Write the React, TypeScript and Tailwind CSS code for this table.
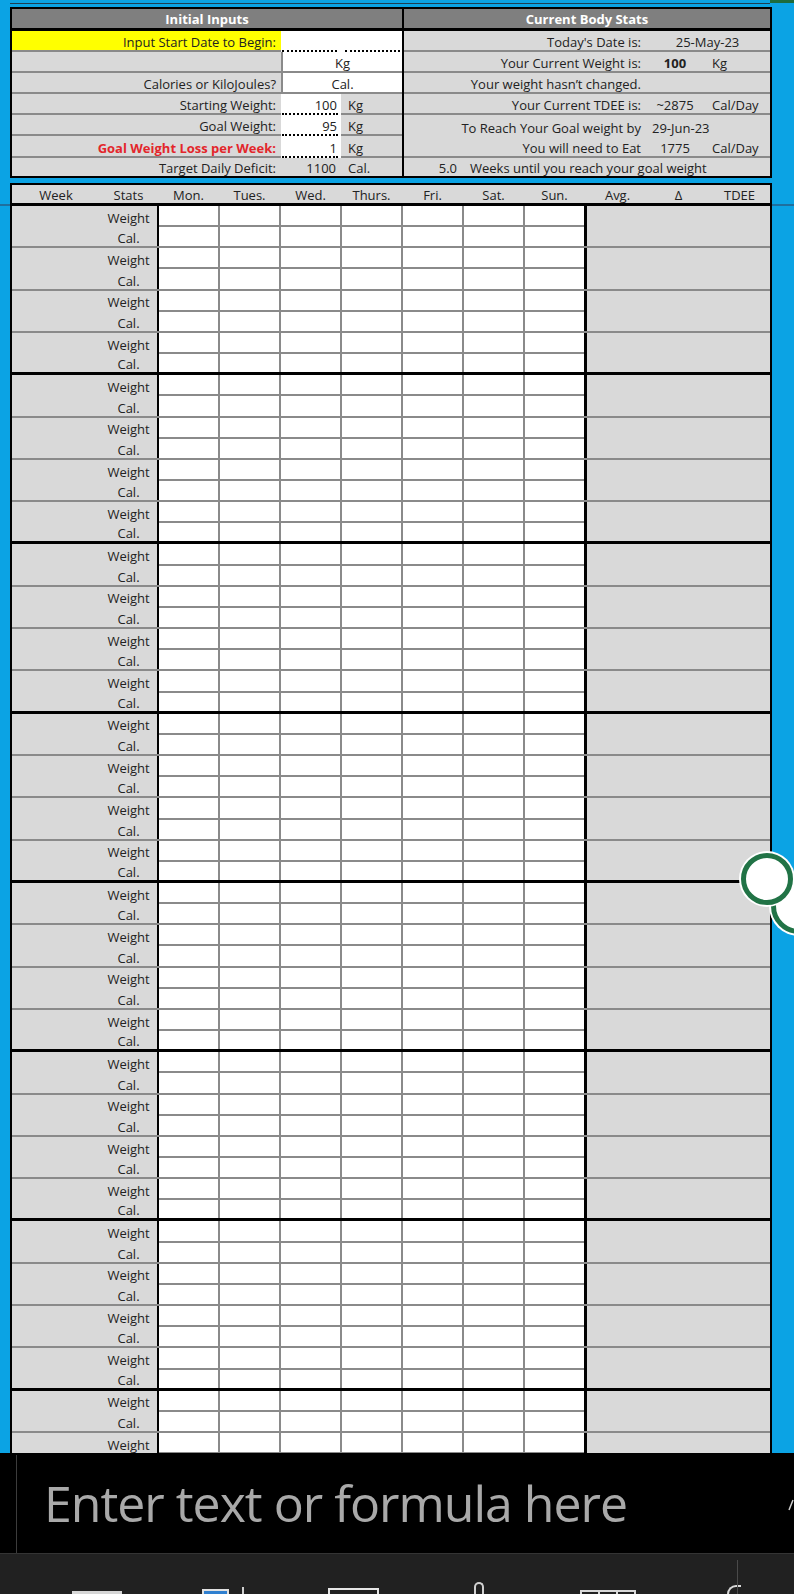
import React from 'react';

const DAYS = ['Mon.', 'Tues.', 'Wed.', 'Thurs.', 'Fri.', 'Sat.', 'Sun.'];

function InputsPanel() {
  return (
    <div className="w-[390px] flex flex-col">
      <div className="h-[21.5px] bg-[#7f7f7f] border-b-[3px] border-black flex items-end justify-center pb-[2px] leading-[13px] font-bold text-white">
        Initial Inputs
      </div>

      {/* start date */}
      <div className="flex h-[21.2px]">
        <div className="w-[269px] bg-[#ffff00] border-b-2 border-[#8a8a8a] flex items-end justify-end pr-[5px] pb-[1px] leading-[13px]">
          Input Start Date to Begin:
        </div>
        <div className="w-[60px] bg-white flex flex-col">
          <div className="flex-1" />
          <div className="ml-[1px] mr-[4px] border-b-2 border-dotted border-black" />
        </div>
        <div className="flex-1 bg-white flex flex-col">
          <div className="flex-1" />
          <div className="ml-[4px] mr-[2px] border-b-2 border-dotted border-black" />
        </div>
      </div>

      <div className="flex h-[21.2px]">
        <div className="w-[269px] bg-[#d9d9d9] border-b-2 border-[#8a8a8a]" />
        <div className="flex-1 bg-white border-b-2 border-l-2 border-[#8a8a8a] flex items-end justify-center pb-[1px] leading-[13px]">
          Kg
        </div>
      </div>

      <div className="flex h-[21.2px]">
        <div className="w-[269px] bg-[#d9d9d9] border-b-2 border-[#8a8a8a] flex items-end justify-end pr-[5px] pb-[1px] leading-[13px]">
          Calories or KiloJoules?
        </div>
        <div className="flex-1 bg-white border-b-2 border-l-2 border-[#8a8a8a] flex items-end justify-center pb-[1px] leading-[13px]">
          Cal.
        </div>
      </div>

      {[
        { label: 'Starting Weight:', value: '100', red: false },
        { label: 'Goal Weight:', value: '95', red: false },
        { label: 'Goal Weight Loss per Week:', value: '1', red: true },
      ].map((r) => (
        <div key={r.label} className="flex h-[21.2px]">
          <div
            className={`w-[269px] bg-[#d9d9d9] border-b-2 border-[#8a8a8a] flex items-end justify-end pr-[5px] pb-[1px] leading-[13px] ${
              r.red ? 'font-bold text-[#e3262b]' : ''
            }`}
          >
            {r.label}
          </div>
          <div className="w-[60px] bg-white flex flex-col">
            <div className="flex-1 flex items-end justify-end pr-[4px] pb-[1px] leading-[13px]">{r.value}</div>
            <div className="ml-[1px] mr-[3px] border-b-2 border-dotted border-black" />
          </div>
          <div className="flex-1 bg-[#d9d9d9] border-b-2 border-[#8a8a8a] flex items-end pl-[7px] pb-[1px] leading-[13px]">
            Kg
          </div>
        </div>
      ))}

      <div className="flex h-[18.3px]">
        <div className="w-[269px] bg-[#d9d9d9] flex items-end justify-end pr-[5px] pb-[1px] leading-[13px]">
          Target Daily Deficit:
        </div>
        <div className="w-[60px] bg-[#d9d9d9] flex items-end justify-end pr-[5px] pb-[1px] leading-[13px]">1100</div>
        <div className="flex-1 bg-[#d9d9d9] flex items-end pl-[7px] pb-[1px] leading-[13px]">Cal.</div>
      </div>
    </div>
  );
}

function StatRow({
  label,
  value,
  unit,
  bold,
}: {
  label: string;
  value?: string;
  unit?: string;
  bold?: boolean;
}) {
  return (
    <div className="flex h-[21.2px] bg-[#d9d9d9] border-b-2 border-[#8a8a8a] leading-[13px]">
      <div className="w-[241px] flex items-end justify-end pr-[4px] pb-[1px]">{label}</div>
      <div className={`w-[60px] flex items-end justify-center pb-[1px] ${bold ? 'font-bold' : ''}`}>{value}</div>
      <div className="flex-1 flex items-end pl-[7px] pb-[1px]">{unit}</div>
    </div>
  );
}

function StatsPanel() {
  return (
    <div className="flex-1 flex flex-col border-l-2 border-black">
      <div className="h-[21.5px] bg-[#7f7f7f] border-b-[3px] border-black flex items-end justify-center pb-[2px] leading-[13px] font-bold text-white">
        Current Body Stats
      </div>
      <div className="flex h-[21.2px] bg-[#d9d9d9] border-b-2 border-[#8a8a8a] leading-[13px]">
        <div className="w-[241px] flex items-end justify-end pr-[4px] pb-[1px]">Today's Date is:</div>
        <div className="flex-1 flex items-end justify-center pb-[1px]">25-May-23</div>
      </div>
      <StatRow label="Your Current Weight is:" value="100" unit="Kg" bold />
      <StatRow label="Your weight hasn’t changed." />
      <StatRow label="Your Current TDEE is:" value="~2875" unit="Cal/Day" />
      <div className="flex h-[21.2px] bg-[#d9d9d9] leading-[13px]">
        <div className="w-[241px] flex items-end justify-end pr-[4px] pb-[1px]">To Reach Your Goal weight by</div>
        <div className="flex-1 flex items-end pl-[7px] pb-[1px]">29-Jun-23</div>
      </div>
      <StatRow label="You will need to Eat" value="1775" unit="Cal/Day" />
      <div className="flex h-[18.3px] bg-[#d9d9d9] leading-[13px]">
        <div className="w-[56px] flex items-end justify-end pr-[3px] pb-[1px]">5.0</div>
        <div className="flex-1 flex items-end pl-[10px] pb-[1px]">Weeks until you reach your goal weight</div>
      </div>
    </div>
  );
}

function Pair({ end, half }: { end: boolean; half?: boolean }) {
  return (
    <div
      className={`flex h-[42.32px] shrink-0 ${
        end ? 'border-b-[3px] border-black' : 'border-b-2 border-[#8a8a8a]'
      }`}
    >
      <div className="w-[145px] bg-[#d9d9d9] flex">
        <div className="w-[88px]" />
        <div className="w-[57px] flex flex-col leading-[13px]">
          <div className="h-[21.16px] flex items-end justify-center pb-[2.5px]">Weight</div>
          <div className="flex-1 flex items-end justify-center pb-[1px]">{half ? '' : 'Cal.'}</div>
        </div>
      </div>
      <div className="w-[2px] bg-black" />
      {DAYS.map((d, i) => (
        <div
          key={d}
          className={`flex flex-col bg-white ${i === 0 ? 'w-[59px]' : 'w-[61px] border-l-2 border-[#8a8a8a]'}`}
        >
          <div className="h-[21.16px] border-b-2 border-[#8a8a8a]" />
          <div className="flex-1" />
        </div>
      ))}
      <div className="w-[3px] bg-black" />
      <div className="flex-1 bg-[#d9d9d9]" />
    </div>
  );
}

function Tracker() {
  // 7 full weeks, then the first rows of week 8 before the formula bar cuts in
  const pairs = Array.from({ length: 30 }, (_, i) => i);
  return (
    <div className="flex-1 min-h-0 flex flex-col border-2 border-b-0 border-black overflow-hidden">
      <div className="h-[21px] shrink-0 flex bg-[#d9d9d9] border-b-[3px] border-black leading-[13px]">
        <div className="w-[88px] flex items-end justify-center pb-[0.5px]">Week</div>
        <div className="w-[57px] flex items-end justify-center pb-[0.5px]">Stats</div>
        <div className="w-[2px]" />
        {DAYS.map((d, i) => (
          <div
            key={d}
            className={`flex items-end justify-center pb-[0.5px] ${i === 0 ? 'w-[59px]' : 'w-[61px] pl-[2px]'}`}
          >
            {d}
          </div>
        ))}
        <div className="w-[3px]" />
        <div className="w-[61px] flex items-end justify-center pb-[0.5px]">Avg.</div>
        <div className="w-[61px] flex items-end justify-center pb-[0.5px]">Δ</div>
        <div className="flex-1 flex items-end justify-center pb-[0.5px]">TDEE</div>
      </div>
      {pairs.map((p) => (
        <Pair key={p} end={p % 4 === 3} half={p === pairs.length - 1} />
      ))}
    </div>
  );
}

function BottomBar() {
  return (
    <div className="h-[41px] bg-[#212121] border-t border-[#343434] flex items-end overflow-hidden">
      <div className="ml-[72px] w-[50px] h-[3px] bg-[#d6d6d6]" />
      <div className="ml-[80px] w-[27px] h-[5px] bg-[#2f7fcf] border-2 border-b-0 border-[#e0e0e0]" />
      <div className="ml-[13px] w-[2px] h-[7px] bg-[#cfcfcf]" />
      <div className="ml-[84px] w-[51px] h-[6px] border-2 border-b-0 border-[#e6e6e6]" />
      <div className="ml-[95px] w-[10px] h-[12px] border-2 border-b-0 border-[#d0d0d0] rounded-t-full" />
      <div className="ml-[96px] w-[56px] h-[4px] border-2 border-b-0 border-[#d8d8d8] flex">
        <div className="flex-1 border-r-2 border-[#d8d8d8]" />
        <div className="flex-1 border-r-2 border-[#d8d8d8]" />
        <div className="flex-1" />
      </div>
      <div className="ml-[91px] w-[14px] h-[9px] border-l-2 border-t-2 border-[#d8d8d8] rounded-tl-full" />
      <div className="ml-[-4px] w-[1px] h-[34px] bg-[#4a4a4a]" />
    </div>
  );
}

export default function App() {
  return (
    <div className="relative w-[794px] h-[1594px] overflow-hidden bg-[#0ba3e4] font-['Open_Sans',sans-serif] text-[13px] text-[#222]">
      <div className="h-[1453px] flex flex-col pl-[10px] pr-[22px] pt-[7px] overflow-hidden">
        <div className="h-[171.3px] shrink-0 flex border-2 border-black">
          <InputsPanel />
          <StatsPanel />
        </div>
        <div className="h-[4.7px] shrink-0" />
        <Tracker />
      </div>

      <div className="h-[100px] bg-black flex items-center relative">
        <div className="absolute left-[16px] top-[2px] bottom-0 w-[1px] bg-[#3c3c3c]" />
        <span className="pl-[44px] text-[50px] leading-[50px] tracking-[-1px] text-[#a9a9a9]">
          Enter text or formula here
        </span>
        <svg className="absolute right-0 top-[44px]" width="6" height="14" viewBox="0 0 6 14">
          <path d="M1 13 L5 3" stroke="#cfcfcf" strokeWidth="1.5" fill="none" />
        </svg>
      </div>

      <BottomBar />

      {/* frozen pane line in margins */}
      <div className="absolute left-0 top-[204px] w-[10px] h-[1.5px] bg-[#1f6f9e]" />
      <div className="absolute right-0 top-[204px] w-[22px] h-[1.5px] bg-[#1f6f9e]" />
      <div className="absolute left-[10px] top-[3px] w-[760px] h-[1px] bg-[#1d3e52]" />
      <div className="absolute right-0 top-0 w-[24px] h-[3px] bg-[#1e6b3c]" />

      {/* selection handles */}
      <div className="absolute left-[771px] top-[878px] w-[56px] h-[56px] rounded-full bg-white border-[5px] border-[#217346] ring-2 ring-white" />
      <div className="absolute left-[741px] top-[853px] w-[52px] h-[52px] rounded-full bg-white border-[5px] border-[#217346] ring-2 ring-white" />
    </div>
  );
}
